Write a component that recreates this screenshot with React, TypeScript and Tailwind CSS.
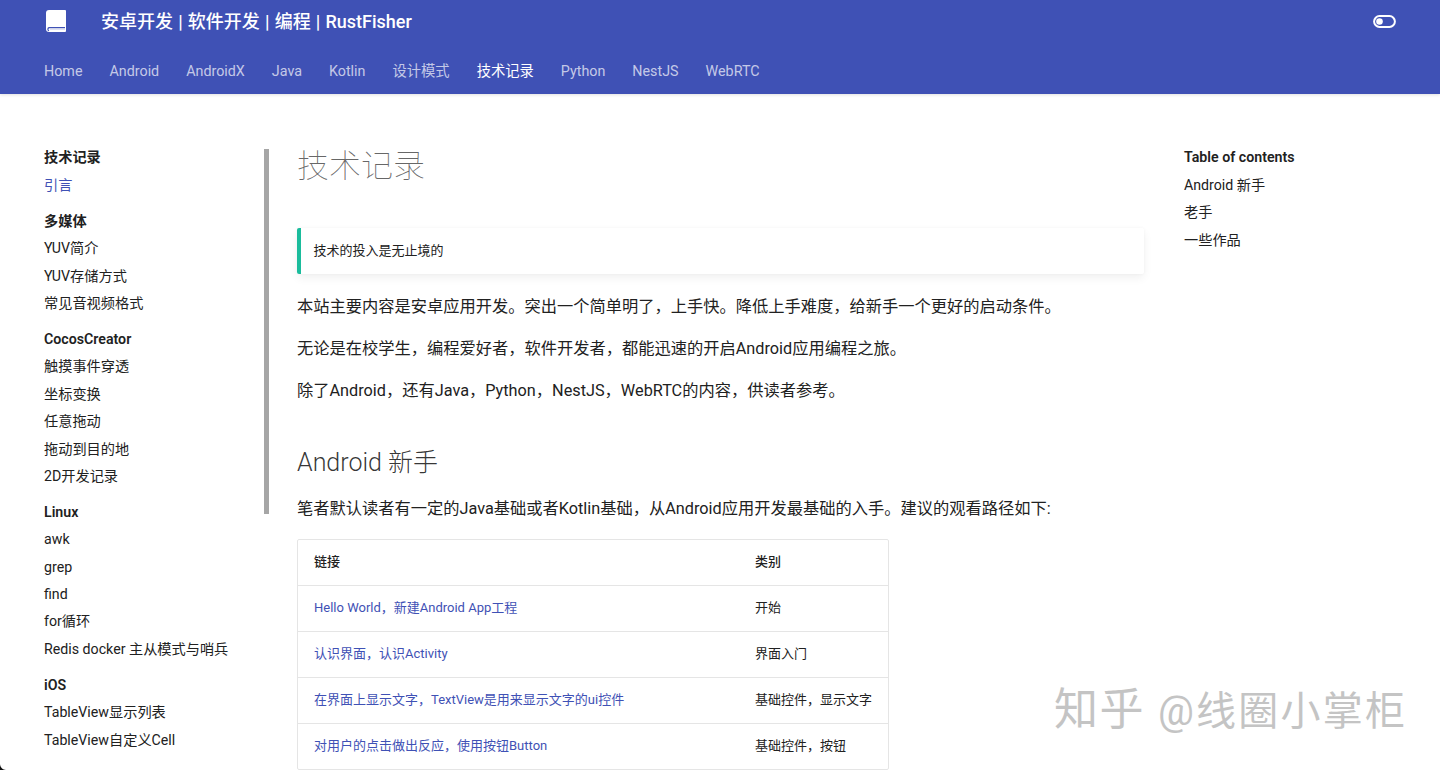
import React from "react";

const tabs = ["Home", "Android", "AndroidX", "Java", "Kotlin", "设计模式", "技术记录", "Python", "NestJS", "WebRTC"];

const nav = [
  { title: "技术记录", items: ["引言"] },
  { title: "多媒体", items: ["YUV简介", "YUV存储方式", "常见音视频格式"] },
  { title: "CocosCreator", items: ["触摸事件穿透", "坐标变换", "任意拖动", "拖动到目的地", "2D开发记录"] },
  { title: "Linux", items: ["awk", "grep", "find", "for循环", "Redis docker 主从模式与哨兵"] },
  { title: "iOS", items: ["TableView显示列表", "TableView自定义Cell"] },
];

const rows = [
  ["Hello World，新建Android App工程", "开始"],
  ["认识界面，认识Activity", "界面入门"],
  ["在界面上显示文字，TextView是用来显示文字的ui控件", "基础控件，显示文字"],
  ["对用户的点击做出反应，使用按钮Button", "基础控件，按钮"],
];

export default function App() {
  return (
    <div className="relative h-[770px] overflow-hidden bg-white font-['Roboto','Noto_Sans_CJK_SC',sans-serif] text-[#212121]">
      <header className="h-[94px] bg-[#3f51b5] shadow-[0_1px_3px_rgba(0,0,0,0.12)]">
        <div className="flex h-[42px] items-center pl-[46px] pr-[44px] text-white">
          <svg className="h-[22px] w-[20px]" viewBox="0 0 20 22">
            <path d="M3 0H19a1 1 0 0 1 1 1V21a1 1 0 0 1-1 1H3a3 3 0 0 1-3-3V3a3 3 0 0 1 3-3Z" fill="white" />
            <path d="M19 17.6H3a1.7 1.7 0 0 0 0 3.2" fill="none" stroke="#3f51b5" strokeWidth="1.2" />
            <path d="M4 19.2H19" stroke="#c5cae9" strokeWidth="0.8" />
          </svg>
          <span className="ml-[35px] text-[18px] font-medium [word-spacing:0.7px]">安卓开发 | 软件开发 | 编程 | RustFisher</span>
          <svg className="ml-auto h-[13px] w-[23px]" viewBox="0 0 23 13" fill="none">
            <rect x="1.1" y="1.1" width="20.8" height="10.8" rx="5.4" stroke="white" strokeWidth="2" />
            <circle cx="6.5" cy="6.5" r="3.3" fill="white" />
          </svg>
        </div>
        <nav className="flex h-[52px] items-center gap-[27px] pt-[8px] pl-[44px] text-[14.3px]">
          {tabs.map((t) => (
            <span key={t} className={t === "技术记录" ? "text-white" : "text-white/70"}>
              {t}
            </span>
          ))}
        </nav>
      </header>

      <div className="flex pl-[44px] pt-[50px]">
        <aside className="relative mt-[0.4px] w-[225px] shrink-0 text-[14.2px]">
          <div className="absolute right-0 top-[5px] h-[365px] w-[5px] bg-black/35" />
          {nav.map((group) => (
            <div key={group.title} className="mb-[8.6px]">
              <div className="flex h-[27.4px] items-center font-semibold">{group.title}</div>
              {group.items.map((item) => (
                <div key={item} className={item === "引言" ? "flex h-[27.4px] items-center text-[#3f51b5]" : "flex h-[27.4px] items-center"}>
                  {item}
                </div>
              ))}
            </div>
          ))}
        </aside>

        <main className="ml-[28px] w-[847px] shrink-0">
          <h1 className="mt-[2px] text-[32px] font-thin leading-[40px] text-black/60">技术记录</h1>
          <blockquote className="mt-[42px] flex h-[46px] items-center rounded-[2px] border-l-[4px] border-[#1abc9c] pl-[12.5px] text-[13px] shadow-[0_4px_10px_rgba(0,0,0,0.06),0_0_3px_rgba(0,0,0,0.04)]">
            技术的投入是无止境的
          </blockquote>
          <p className="mt-[21px] text-[16.25px] leading-[24px]">本站主要内容是安卓应用开发。突出一个简单明了，上手快。降低上手难度，给新手一个更好的启动条件。</p>
          <p className="mt-[18px] text-[16.25px] leading-[24px]">无论是在校学生，编程爱好者，软件开发者，都能迅速的开启Android应用编程之旅。</p>
          <p className="mt-[18px] text-[16.25px] leading-[24px]">除了Android，还有Java，Python，NestJS，WebRTC的内容，供读者参考。</p>
          <h2 className="mt-[44px] text-[25px] font-light leading-[32px] text-black/80">Android 新手</h2>
          <p className="mt-[18px] text-[16.25px] leading-[24px]">笔者默认读者有一定的Java基础或者Kotlin基础，从Android应用开发最基础的入手。建议的观看路径如下:</p>
          <div className="mt-[17.5px] w-[592px] rounded-[2px] border border-black/10 text-[13px]">
            <div className="flex h-[45px] items-center font-medium">
              <span className="w-[457px] pl-[16px]">链接</span>
              <span>类别</span>
            </div>
            {rows.map(([link, kind]) => (
              <div key={link} className="flex h-[46px] items-center border-t border-black/10">
                <span className="w-[457px] pl-[16px] text-[#3f51b5]">{link}</span>
                <span>{kind}</span>
              </div>
            ))}
          </div>
        </main>

        <aside className="ml-[40px] mt-[0.4px] text-[14.2px]">
          <div className="flex h-[27.4px] items-center font-semibold">Table of contents</div>
          <div className="flex h-[27.4px] items-center">Android 新手</div>
          <div className="flex h-[27.4px] items-center">老手</div>
          <div className="flex h-[27.4px] items-center">一些作品</div>
        </aside>
      </div>

      <div className="absolute left-[1054px] top-[682px] flex items-baseline whitespace-nowrap leading-[56px] text-[#c4c4c4]">
        <span className="text-[44px] tracking-[1.5px]">知乎</span>
        <span className="ml-[13px] text-[40px] tracking-[2.2px]">@线圈小掌柜</span>
      </div>

      <svg className="absolute bottom-0 left-0 h-[6px] w-[6px]" viewBox="0 0 6 6">
        <path d="M0 0C0 3 3 6 6 6H0Z" fill="#111" />
      </svg>
    </div>
  );
}
